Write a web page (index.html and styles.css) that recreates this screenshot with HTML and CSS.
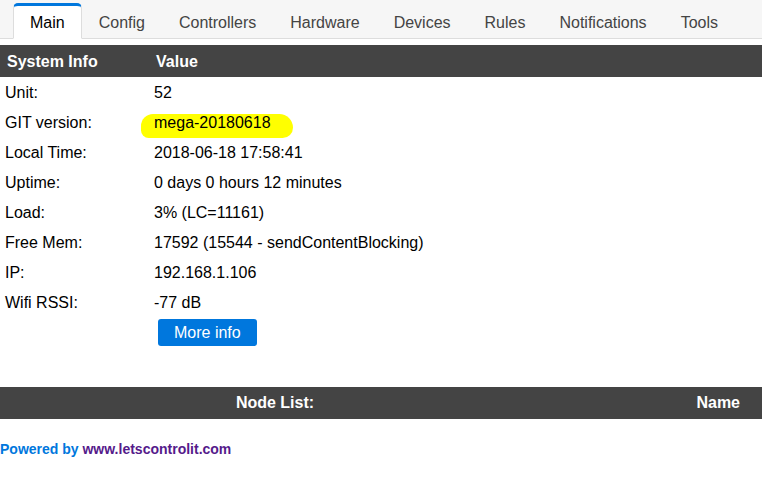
FILE: index.html
```html
<!DOCTYPE html>
<html>
<head>
<meta charset="utf-8">
<link rel="stylesheet" href="styles.css">
</head>
<body>
<nav class="menubar">
  <a class="menu active" href="#">Main</a>
  <a class="menu" href="#">Config</a>
  <a class="menu" href="#">Controllers</a>
  <a class="menu" href="#">Hardware</a>
  <a class="menu" href="#">Devices</a>
  <a class="menu" href="#">Rules</a>
  <a class="menu" href="#">Notifications</a>
  <a class="menu" href="#">Tools</a>
</nav>
<main class="content">
  <table class="sysinfo">
    <tr class="head"><th class="c1">System Info</th><th>Value</th></tr>
    <tr><td>Unit:</td><td>52</td></tr>
    <tr><td>GIT version:</td><td><span class="marker">mega-20180618</span></td></tr>
    <tr><td>Local Time:</td><td>2018-06-18 17:58:41</td></tr>
    <tr><td>Uptime:</td><td>0 days 0 hours 12 minutes</td></tr>
    <tr><td>Load:</td><td>3% (LC=11161)</td></tr>
    <tr><td>Free Mem:</td><td>17592 (15544 - sendContentBlocking)</td></tr>
    <tr><td>IP:</td><td>192.168.1.106</td></tr>
    <tr><td>Wifi RSSI:</td><td>-77 dB</td></tr>
    <tr class="btnrow"><td></td><td><a class="button" href="#">More info</a></td></tr>
  </table>
  <div class="nodebar">
    <div class="nodecol">Node List:</div>
    <div class="namecol">Name</div>
  </div>
  <footer class="footer">Powered by <a href="#">www.letscontrolit.com</a></footer>
</main>
</body>
</html>
```
FILE: styles.css
```css
html, body {
  margin: 0;
  padding: 0;
  background: #fff;
  overflow: hidden;
}
body {
  font-family: "Liberation Sans", Arial, sans-serif;
  font-size: 16px;
  color: #000;
}
.menubar {
  display: flex;
  align-items: flex-end;
  height: 38px;
  padding-left: 13px;
  background: #f6f6f6;
  border-bottom: 1px solid #ddd;
}
.menu {
  display: block;
  height: 25px;
  padding: 7px 16px 0 16px;
  margin-bottom: -1px;
  color: #444;
  text-decoration: none;
  white-space: nowrap;
  line-height: 20px;
  border: 1px solid transparent;
  border-top-width: 3px;
  border-radius: 5px 5px 0 0;
}
.menu.active {
  color: #000;
  background: #fff;
  border-color: #07d #ddd #fff #ddd;
}
.content {
  padding-top: 6px;
}
.sysinfo {
  border-collapse: collapse;
  width: 100%;
}
.sysinfo th {
  background: #444;
  color: #fff;
  font-weight: bold;
  text-align: left;
  height: 32px;
  padding: 2px 7px 0 7px;
  box-sizing: border-box;
}
.sysinfo th.c1 {
  width: 149px;
}
.sysinfo td {
  height: 30px;
  padding: 2px 5px 0 5px;
  box-sizing: border-box;
  vertical-align: middle;
}
.sysinfo td:first-child {
  width: 149px;
}
.marker {
  background: #ffff00;
  margin-left: -13px;
  padding: 0 22px 7px 13px;
  border-radius: 14px 16px 12px 9px;
}
.btnrow td {
  height: 32px;
  vertical-align: top;
  padding-top: 2px;
}
.button {
  display: inline-block;
  margin-left: 4px;
  padding: 0 16px;
  height: 27px;
  line-height: 27px;
  background: #07d;
  color: #fff;
  text-decoration: none;
  border-radius: 3px;
}
.nodebar {
  display: flex;
  align-items: center;
  margin-top: 38px;
  height: 32px;
  background: #444;
  color: #fff;
  font-weight: bold;
  white-space: nowrap;
}
.nodecol {
  flex: 0 0 550px;
  text-align: center;
}
.namecol {
  flex: 1;
  text-align: right;
  padding-right: 22px;
}
.footer {
  margin-top: 22px;
  font-size: 14px;
  font-weight: bold;
  color: #07d;
}
.footer a {
  color: #551a8b;
  text-decoration: none;
}
```
